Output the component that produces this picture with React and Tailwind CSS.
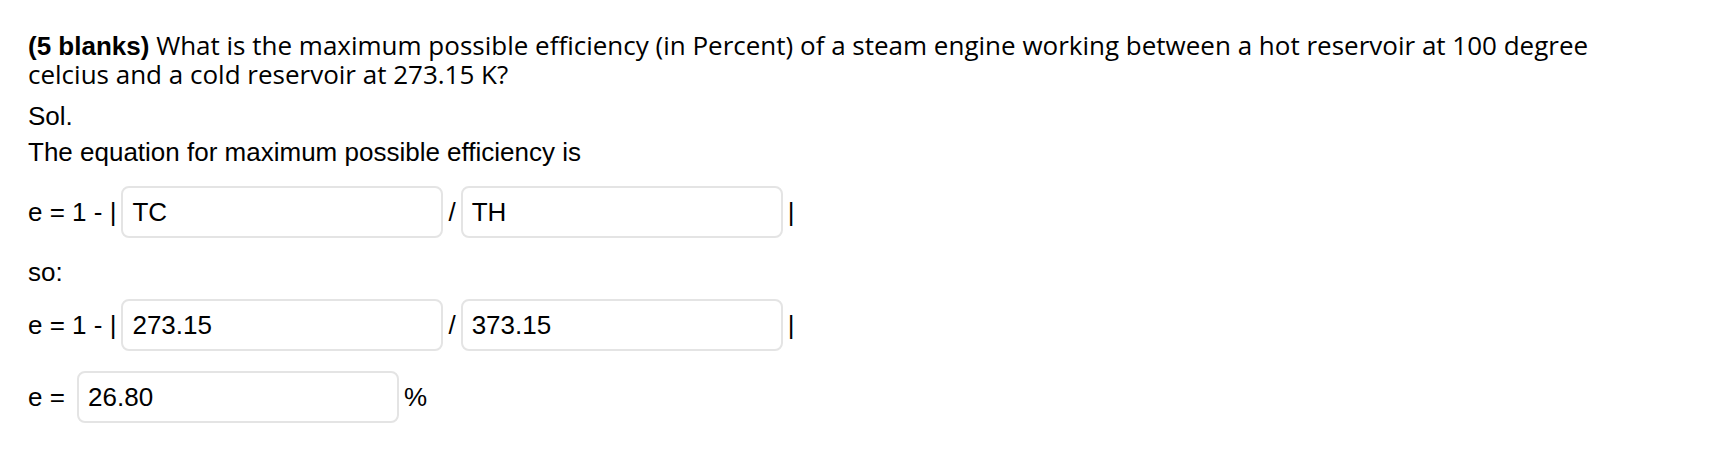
import React from "react";

function Box({ value, className = "" }) {
  return (
    <div
      className={`flex items-center h-[52px] w-[322px] shrink-0 border-2 border-[#e4e4e4] rounded-[8px] bg-white pl-[9px] text-[26px] leading-[30px] text-black ${className}`}
    >
      {value}
    </div>
  );
}

export default function App() {
  return (
    <div className="min-h-[466px] w-[1712px] bg-white pt-[31px] pl-[28px] text-black font-['Liberation_Sans',Arial,sans-serif]">
      <div className="font-['Open_Sans',sans-serif] text-[26px] leading-[28px]">
        <div className="whitespace-nowrap">
          <span className="font-bold font-['Liberation_Sans',Arial,sans-serif]">(5 blanks)</span> What is the maximum possible efficiency (in Percent) of a steam engine working between a hot reservoir at 100 degree
        </div>
        <div className="whitespace-nowrap">celcius and a cold reservoir at 273.15 K?</div>
      </div>
      <p className="mt-[13px] text-[26px] leading-[30px]">Sol.</p>
      <p className="mt-[6px] text-[26px] leading-[30px]">The equation for maximum possible efficiency is</p>

      <div className="mt-[19px] flex items-center text-[26px] leading-[30px] whitespace-pre">
        <span>e = 1 - |</span>
        <Box value="TC" className="ml-[5px]" />
        <span className="mx-[5px]">/</span>
        <Box value="TH" />
        <span className="ml-[5px]">|</span>
      </div>

      <p className="mt-[19px] text-[26px] leading-[30px]">so:</p>

      <div className="mt-[12px] flex items-center text-[26px] leading-[30px] whitespace-pre">
        <span>e = 1 - |</span>
        <Box value="273.15" className="ml-[5px]" />
        <span className="mx-[5px]">/</span>
        <Box value="373.15" />
        <span className="ml-[5px]">|</span>
      </div>

      <div className="mt-[20px] flex items-center text-[26px] leading-[30px] whitespace-pre">
        <span>e = </span>
        <Box value="26.80" className="ml-[5px]" />
        <span className="ml-[5px]">%</span>
      </div>
    </div>
  );
}
